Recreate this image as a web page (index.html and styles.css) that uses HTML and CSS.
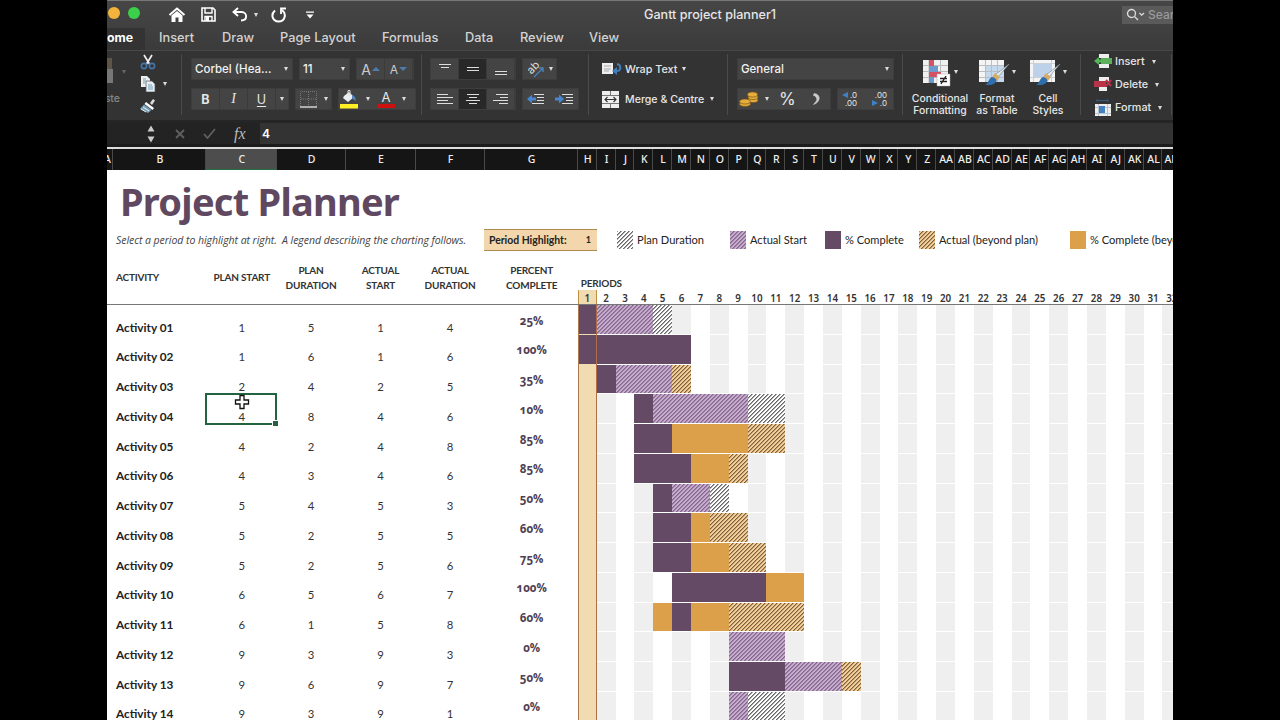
FILE: index.html
```html
<!DOCTYPE html>
<html lang="en">

<head>
    <meta charset="UTF-8">
    <meta name="viewport" content="width=device-width, initial-scale=1.0">
    <title>Gantt project planner1</title>
    <link rel="stylesheet" href="styles.css">
</head>

<body>
    <div class="window">
        <!-- Title bar -->
        <header class="titlebar">
            <span class="light yellow"></span>
            <span class="light green"></span>
            <svg class="quick home" width="18" height="16" viewBox="0 0 18 16"><path d="M1.500 8 9 1.500 16.500 8" fill="none" stroke="#fff" stroke-width="2"/><path d="M3.500 8.500 9 4l5.500 4.500V15h-4v-4.500h-3V15h-4z" fill="#fff"/></svg>
            <svg class="quick save" width="15" height="15" viewBox="0 0 15 15"><path d="M1 1h11l2 2v11H1z" fill="none" stroke="#fff" stroke-width="1.600"/><path d="M4 1v5h7V1M4 14V9.500h7V14" fill="none" stroke="#fff" stroke-width="1.400"/><path d="M5 10h3v4H5z" fill="#fff"/></svg>
            <svg class="quick undo" width="16" height="15" viewBox="0 0 16 15"><path d="M6 1 1.500 5 6 9M2 5h7.500c6 0 6.500 8.500-.5 8.500" fill="none" stroke="#fff" stroke-width="1.900"/></svg>
            <i class="caret"></i>
            <svg class="quick redo" width="16" height="16" viewBox="0 0 16 16"><path d="M4 3.500C-1 8 2 14.500 7.500 14.500c6.500 0 8.500-7.500 3.500-11.500" fill="none" stroke="#fff" stroke-width="2"/><path d="M15 1.500h-5v5.500" fill="none" stroke="#fff" stroke-width="1.800"/></svg>
            <svg class="quick more" width="8" height="8" viewBox="0 0 8 8"><path d="M0 .5h8v1.300H0zM.5 3.500h7L4 7.500z" fill="#fff"/></svg>
            <h1 class="doc-title">Gantt project planner1</h1>
            <div class="search">
                <svg width="20" height="14" viewBox="0 0 20 14"><circle cx="5.500" cy="5.500" r="4" fill="none" stroke="#ddd" stroke-width="1.300"/><path d="m8.500 8.500 3.500 3.500M13.500 5l2.200 2.200L18 5" fill="none" stroke="#ddd" stroke-width="1.300"/></svg>
                <span>Search Sheet</span>
            </div>
        </header>

        <nav class="tabs">
            <span class="tab active">Home</span>
            <span class="tab t-insert">Insert</span>
            <span class="tab t-draw">Draw</span>
            <span class="tab t-page">Page Layout</span>
            <span class="tab t-formulas">Formulas</span>
            <span class="tab t-data">Data</span>
            <span class="tab t-review">Review</span>
            <span class="tab t-view">View</span>
        </nav>

        <!-- Ribbon -->
        <div class="ribbon">
            <div class="group clipboard">
                <div class="paste">
                    <svg width="7" height="27" viewBox="0 0 7 27"><path d="M0 1h5v14H0z" fill="#5d5546"/><path d="M0 12h6v14H0z" fill="#777"/></svg>
                    <span>Paste</span>
                </div>
                <i class="caret dim"></i>
                <div class="clip-icons">
                    <svg width="16" height="16" viewBox="0 0 16 16"><path d="m4 1 5.500 9M12 1 6.500 10" stroke="#eee" stroke-width="1.700"/><g fill="none" stroke="#4474a8" stroke-width="1.700"><circle cx="4" cy="12" r="2.600"/><circle cx="12" cy="12" r="2.600"/></g></svg>
                    <svg width="16" height="16" viewBox="0 0 16 16"><path d="M1 0h6l3 3v8H1z" fill="#eee"/><path d="M6 5h6l3 3v8H6z" fill="#e6edf3" stroke="#555" stroke-width=".7"/><path d="M3 3h3M3 5h3M3 7h2M8 9h4M8 11h5M8 13h5" stroke="#70a0ba"/></svg>
                    <svg width="16" height="16" viewBox="0 0 16 16"><path d="m10 5 3-4 2 1.500-3 4.500z" fill="#ddd"/><path d="m6 4 8 6-1.500 2L4.500 6z" fill="#fff"/><path d="m4 6.500 7.500 5.500L8 15 0 11z" fill="#79a0bb"/><path d="m3 9 6 4M1 11l5 3" stroke="#eee"/></svg>
                </div>
                <i class="caret"></i>
            </div>

            <div class="group font">
                <div class="line">
                    <div class="box combo font-name"><span>Corbel (Hea...</span><i class="caret"></i></div>
                    <div class="box combo font-size"><span>11</span><i class="caret"></i></div>
                    <div class="box pair">
                        <span class="cell"><b class="big-a">A</b><i class="tri up"></i></span>
                        <span class="cell"><b class="small-a">A</b><i class="tri down"></i></span>
                    </div>
                </div>
                <div class="line">
                    <div class="box biu"><span class="cell"><b>B</b></span><span class="cell"><em>I</em></span><span class="cell"><u>U</u></span><i class="caret"></i></div>
                    <div class="box borders">
                        <svg width="17" height="17" viewBox="0 0 17 17"><path d="M.5 15V.5h16V15M8.500 1v14M1 8h15" fill="none" stroke="#777" stroke-dasharray="1 1"/><path d="M0 16h17" stroke="#ddd" stroke-width="1.400"/></svg>
                        <i class="caret"></i>
                    </div>
                    <div class="box colours">
                        <svg width="20" height="20" viewBox="0 0 20 20"><path d="m5 7 5-4 5 5-6 5-5-4z" fill="#e8eef2"/><path d="M9 6V1.500h2V7" fill="none" stroke="#ddd"/><path d="M13 6c3 1 4 3 3.500 6L13 9z" fill="#4f8ac5"/><path d="M1 15h18v4.500H1z" fill="#ffef24"/></svg>
                        <i class="caret"></i>
                        <span class="font-colour">A</span>
                        <i class="caret"></i>
                    </div>
                </div>
            </div>

            <div class="group align">
                <div class="line">
                    <div class="box trio">
                        <span class="cell"><svg width="14" height="16"><path d="M1 3.500h12M3 6.500h8" stroke="#ddd"/></svg></span>
                        <span class="cell on"><svg width="14" height="16"><path d="M1 6.500h12M1 9.500h12" stroke="#ddd"/></svg></span>
                        <span class="cell"><svg width="14" height="16"><path d="M1 10.500h12M1 13.500h12" stroke="#ddd"/></svg></span>
                    </div>
                    <div class="box orient">
                        <svg width="18" height="18" viewBox="0 0 18 18"><text class="ab" x="0" y="11" transform="rotate(-45 6 9)">ab</text><path d="m6 17 9-9M11 8h4v4" fill="none" stroke="#4b83b8" stroke-width="1.400"/></svg>
                        <i class="caret"></i>
                    </div>
                </div>
                <div class="line">
                    <div class="box trio">
                        <span class="cell"><svg width="16" height="12"><path d="M0 1.500h11M0 4.500h16M0 7.500h11M0 10.500h16" stroke="#ddd"/></svg></span>
                        <span class="cell on"><svg width="14" height="12"><path d="M1 1.500h12M3 4.500h8M0 7.500h14M3 10.500h8" stroke="#ddd"/></svg></span>
                        <span class="cell"><svg width="16" height="12"><path d="M3 1.500h12M7 4.500h8M0 7.500h15M6 10.500h9" stroke="#ddd"/></svg></span>
                    </div>
                    <div class="box indents">
                        <svg width="18" height="12" viewBox="0 0 18 12"><path d="M7 1.500h10M10 4.500h7M10 7.500h7M5 10.500h12" stroke="#ddd"/><path d="m0 6 5-4.500v3h4v3H5v3z" fill="#4687cf"/></svg>
                        <svg width="18" height="12" viewBox="0 0 18 12"><path d="M7 1.500h11M11 4.500h7M11 7.500h7M7 10.500h11" stroke="#ddd"/><path d="M9 6 4 1.500v3H0v3h4v3z" fill="#4687cf"/></svg>
                    </div>
                </div>
            </div>

            <div class="group wrap">
                <div class="line">
                    <svg width="20" height="14" viewBox="0 0 20 14"><path d="M0 1h11v11H0z" fill="#eee"/><path d="M2 4h7M2 7h7M2 9h5" stroke="#aaa"/><path d="M15 2c5 1 4 8-1 7" fill="none" stroke="#427eb9" stroke-width="2"/><path d="m10 9 5-4v8z" fill="#427eb9"/></svg>
                    <span>Wrap Text</span><i class="caret"></i>
                </div>
                <div class="line merge">
                    <svg width="17" height="17" viewBox="0 0 17 17"><path d="M0 0h17v17H0z" fill="#eee"/><path d="M0 4.500h17M0 12.500h17M8.500 0v4M8.500 13v4" stroke="#777"/><path d="M3 8.500h11M5.500 6 3 8.500 5.500 11M11.500 6 14 8.500 11.500 11" fill="none" stroke="#333" stroke-width="1.100"/></svg>
                    <span>Merge &amp; Centre</span><i class="caret"></i>
                </div>
            </div>

            <div class="group number">
                <div class="line">
                    <div class="box combo general"><span>General</span><i class="caret"></i></div>
                </div>
                <div class="line">
                    <div class="box currency">
                        <svg width="20" height="16" viewBox="0 0 20 16"><g fill="#e5ad3c" stroke="#7c5516" stroke-width=".7"><ellipse cx="14" cy="9" rx="5" ry="2.500"/><ellipse cx="14" cy="6" rx="5" ry="2.500"/><ellipse cx="13.500" cy="3.500" rx="5" ry="2.500"/><ellipse cx="6" cy="13" rx="5.500" ry="2.500"/><ellipse cx="6" cy="10.500" rx="5.500" ry="2.500"/></g></svg>
                        <i class="caret"></i>
                        <span class="percent">%</span>
                        <svg width="8" height="12" viewBox="0 0 8 12"><path d="M2 .5C9 1 9 9 1.500 11.500 4.500 8 5.500 6.500 4.500 5 4 3.500 2.500 2.500 1.500 2.500z" fill="#ccc" stroke="#ccc" stroke-width=".6"/></svg>
                    </div>
                    <div class="box decimals">
                        <span><i class="arrow left"></i>.0<br>.00</span>
                        <span>.00<br><i class="arrow right"></i>.0</span>
                    </div>
                </div>
            </div>

            <div class="group styles">
                <div class="tool t1">
                    <div class="tool-icon">
                        <svg width="30" height="28" viewBox="0 0 30 28"><path d="M1 1h25v23H1z" fill="#eef0f2"/><path d="M1 6.500h25M1 12.500h25M1 18.500h25M7 1v23M18.500 1v23" stroke="#bbb"/><path d="M7 1h5v6H7z" fill="#d65161"/><path d="M7 7h9v6H7z" fill="#6c99ce"/><path d="M7 13h12v5H7z" fill="#d65161"/><path d="M7 18h5v6H7z" fill="#6c99ce"/><path d="M15 15h13v12H15z" fill="#fff" stroke="#aaa" stroke-width=".5"/><path d="M18 19.500h7M18 22.500h7M24 17l-5 8" stroke="#222" stroke-width="1.400"/></svg>
                        <i class="caret"></i>
                    </div>
                    <span>Conditional<br>Formatting</span>
                </div>
                <div class="tool t2">
                    <div class="tool-icon">
                        <svg width="32" height="28" viewBox="0 0 32 28"><path d="M1 1h25v22H1z" fill="#f4f4f4"/><path d="M8 7h18v16H8z" fill="#c3d9ee"/><path d="M1 6.500h25M1 12.500h25M1 18.500h25M7.500 1v22M13.500 1v22M19.500 1v22" stroke="#b7bec4"/><path d="M31 5 20 18l-3-2z" fill="#e8eef0" stroke="#7c8d96" stroke-width=".7"/><path d="m17 14 5 4-3 4-5-4z" fill="#d5ab68"/><path d="M14 18c2 0 6 3 4 5-3 4-8 3-11 3 4-2 3-6 7-8z" fill="#2f6fae"/></svg>
                        <i class="caret"></i>
                    </div>
                    <span>Format<br>as Table</span>
                </div>
                <div class="tool t3">
                    <div class="tool-icon">
                        <svg width="32" height="28" viewBox="0 0 32 28"><path d="M1 1h25v22H1z" fill="#f4f4f4"/><path d="M5 5h17v13H5z" fill="#bdd2ea"/><path d="M1 4.500h25M1 18.500h25M4.500 1v22M22.500 1v22" stroke="#cbd0d4"/><path d="M31 5 20 18l-3-2z" fill="#e8eef0" stroke="#7c8d96" stroke-width=".7"/><path d="m17 14 5 4-3 4-5-4z" fill="#d5ab68"/><path d="M14 18c2 0 6 3 4 5-3 4-8 3-11 3 4-2 3-6 7-8z" fill="#2f6fae"/></svg>
                        <i class="caret"></i>
                    </div>
                    <span>Cell<br>Styles</span>
                </div>
            </div>

            <div class="group cells">
                <div class="line">
                    <svg width="18" height="15" viewBox="0 0 18 15"><path d="M5 0h10v4H5zM5 10h10v4H5z" fill="#eee"/><path d="M7 4h11v6H7z" fill="#5fae60"/><path d="m0 7 5-4v2.500h5v3H5V11z" fill="#53b558"/></svg>
                    <span>Insert</span><i class="caret"></i>
                </div>
                <div class="line">
                    <svg width="18" height="15" viewBox="0 0 18 15"><path d="M5 0h10v4H5zM5 10h8v4H5z" fill="#eee"/><path d="M0 4h12v6H0z" fill="#b93447"/><path d="m12 3 5 6M17 3l-5 6" stroke="#b93447" stroke-width="2"/></svg>
                    <span>Delete</span><i class="caret"></i>
                </div>
                <div class="line">
                    <svg width="18" height="17" viewBox="0 0 18 17"><path d="M3 1.500h11M3 0v3M14 0v3" stroke="#315a88"/><path d="M1 5h16v12H1z" fill="#eee"/><path d="M1 8.500h16M1 14.500h16M4.500 5v12M13.500 5v12" stroke="#b9c5cf"/><path d="M5 7h6v7H5z" fill="#4681c0"/></svg>
                    <span>Format</span><i class="caret"></i>
                </div>
            </div>
        </div>

        <!-- Formula bar -->
        <div class="formula">
            <div class="name-box">
                <svg width="8" height="18" viewBox="0 0 8 18"><path d="M.5 6.500 4 .5l3.500 6zM.5 11.500 4 17.500l3.500-6z" fill="#ccc"/></svg>
            </div>
            <svg class="cancel" width="10" height="10" viewBox="0 0 10 10"><path d="m1 1 8 8M9 1 1 9" stroke="#606060" stroke-width="1.800"/></svg>
            <svg class="accept" width="13" height="11" viewBox="0 0 13 11"><path d="m1 6 3.500 4L12 1" fill="none" stroke="#606060" stroke-width="1.800"/></svg>
            <em class="fx">fx</em>
            <span class="value">4</span>
        </div>

        <!-- Sheet -->
        <div class="letters grid" id="letters"></div>
        <main class="sheet">
            <h2>Project Planner</h2>
            <div class="legend">
                <p class="hint">Select a period to highlight at right.&nbsp; A legend describing the charting follows.</p>
                <div class="highlight"><span>Period Highlight:</span><span class="highlight-value">1</span></div>
                <div class="key k1"><i class="swatch plan"></i>Plan Duration</div>
                <div class="key k2"><i class="swatch actual"></i>Actual Start</div>
                <div class="key k3"><i class="swatch complete"></i>% Complete</div>
                <div class="key k4"><i class="swatch beyond"></i>Actual (beyond plan)</div>
                <div class="key k5"><i class="swatch over"></i>% Complete (beyond plan)</div>
            </div>
            <div class="head grid" id="head">
                <span class="label first">ACTIVITY</span>
                <span class="label c3">PLAN START</span>
                <span class="label c4">PLAN<br>DURATION</span>
                <span class="label c5">ACTUAL<br>START</span>
                <span class="label c6">ACTUAL<br>DURATION</span>
                <span class="label c7">PERCENT<br>COMPLETE</span>
                <span class="periods">PERIODS</span>
            </div>
            <div class="rows" id="rows"></div>
        </main>
    </div>
    <script src="script.js"></script>
</body>

</html>
```

FILE: styles.css
```css
body {
    margin: 0;
    background: #000;
    height: 720px;
    overflow: hidden;
    font-family: Inter, "Liberation Sans", sans-serif;
}

.window {
    width: 1066px;
    height: 720px;
    margin-left: 107px;
    overflow: hidden;
    background: #fff;
    color: #e6e6e6;
}

svg {
    flex: none;
}

/* small triangle used by every drop-down */
.caret {
    flex: none;
    width: 0;
    height: 0;
    border: 2.5px solid transparent;
    border-top: 4px solid #ddd;
    border-bottom: 0;
}

.caret.dim {
    border-top-color: #666;
}

/* title bar */
.titlebar {
    display: flex;
    align-items: center;
    height: 28px;
    box-sizing: border-box;
    border-top: 1px solid #777;
    background: linear-gradient(#464646, #404040);
}

.titlebar > * {
    flex: none;
}

.light {
    width: 12px;
    height: 12px;
    margin-bottom: 3px;
    border-radius: 50%;
}

.yellow {
    background: #f4b43c;
    margin-left: 1px;
}

.green {
    background: #3bcf4a;
    margin-left: 8px;
}

.home { margin-left: 28px; }
.save { margin-left: 15px; }
.undo { margin-left: 16px; }
.titlebar .caret { margin-left: 6px; }
.redo { margin-left: 13px; }
.more { margin-left: 19px; }

.doc-title {
    margin: 0 0 0 330px;
    width: 140px;
    font-size: 12.6px;
    font-weight: 500;
    white-space: nowrap;
}

.search {
    display: flex;
    align-items: center;
    box-sizing: border-box;
    gap: 2px;
    height: 18px;
    width: 80px;
    margin-left: 338px;
    padding-left: 4px;
    background: #5a5a5a;
    color: #999;
    font-size: 12px;
    font-weight: 500;
    white-space: nowrap;
}

/* tabs */
.tabs {
    display: flex;
    height: 22px;
    background: linear-gradient(#404040, #3b3b3b);
    font-size: 12.8px;
    font-weight: 500;
    line-height: 20px;
    color: #d2d2d2;
    white-space: nowrap;
}

.tab {
    flex: none;
}

.tab.active {
    display: flex;
    justify-content: flex-end;
    box-sizing: border-box;
    width: 38px;
    padding-right: 12px;
    height: 22px;
    background: #333;
    color: #fff;
    font-size: 12.3px;
    font-weight: 700;
}

.t-insert { width: 62px; padding-left: 14px; box-sizing: border-box; }
.t-draw { width: 58px; margin-left: 15px; }
.t-page { width: 102px; }
.t-formulas { width: 83px; }
.t-data { width: 55px; }
.t-review { width: 69px; }

/* ribbon */
.ribbon {
    display: flex;
    height: 70px;
    box-sizing: border-box;
    border-top: 1px solid #484848;
    background: #333;
    font-size: 10.8px;
    font-weight: 500;
}

.group {
    flex: none;
    box-sizing: border-box;
    margin: 3px 0 5px;
    padding: 4px 0 0 8px;
    border-right: 1px solid #4a4a4a;
    white-space: nowrap;
}

.line {
    display: flex;
    align-items: center;
    height: 22px;
    margin-bottom: 8px;
    gap: 6px;
}

.box {
    display: flex;
    align-items: center;
    height: 22px;
    box-sizing: border-box;
    background: #444;
    border: 1px solid #3d3d3d;
}

.cell {
    display: flex;
    align-items: center;
    justify-content: center;
    width: 28px;
    height: 20px;
    border-right: 1px solid #3b3b3b;
    box-sizing: border-box;
}

.cell.on {
    background: #282828;
}

.combo {
    justify-content: space-between;
    padding: 0 4px 0 3px;
    font-size: 11.5px;
    color: #f2f2f2;
}

.clipboard {
    display: flex;
    width: 75px;
    padding: 0;
}

.paste {
    display: flex;
    flex-direction: column;
    align-items: flex-end;
    justify-content: space-between;
    width: 13px;
    height: 48px;
    padding-top: 3px;
    color: #888;
    font-size: 10.5px;
}

.paste svg {
    align-self: flex-start;
}

.clipboard .caret {
    margin: 16px 0 0 2px;
}

.clip-icons {
    display: flex;
    flex-direction: column;
    gap: 6px;
    margin-left: 14px;
}

.clipboard .clip-icons + .caret {
    margin: 28px 0 0 7px;
}

.clipboard .caret.dim {
    margin-left: 2px;
}

.font { width: 240px; padding-left: 9px; }
.font-name { width: 102px; }
.font-size { width: 51px; }
.pair { width: 58px; color: #ccc; }

.big-a {
    font-size: 14px;
    font-weight: 400;
}

.small-a {
    font-size: 12px;
    font-weight: 400;
}

.tri {
    border: 4px solid transparent;
    margin-left: 1px;
}

.tri.up {
    border-bottom-color: #4d7cad;
    border-top: 0;
}

.tri.down {
    border-top-color: #4d7cad;
    border-bottom: 0;
}

.biu {
    width: 98px;
    font-size: 12.5px;
}

.biu em {
    font-family: "Liberation Serif", serif;
    font-size: 14px;
}

.biu u {
    font-weight: 400;
    text-underline-offset: 2px;
}

.biu .caret { margin-left: 4px; }
.borders { width: 37px; padding-left: 4px; gap: 7px; }
.colours { width: 78px; padding-left: 0; gap: 7px; }

.font-colour {
    width: 18px;
    height: 18px;
    line-height: 14px;
    border-bottom: 4px solid #cc1111;
    box-sizing: border-box;
    text-align: center;
    font-size: 13px;
    font-weight: 400;
}

.align { width: 167px; }
.trio { width: 86px; }
.orient { width: 35px; padding-left: 5px; gap: 3px; }
.indents { width: 57px; padding-left: 4px; gap: 10px; }

.ab {
    font: 11px Inter, sans-serif;
    fill: #ddd;
}

.wrap {
    width: 139px;
    padding-left: 13px;
}

.wrap .line {
    gap: 3px;
}

.wrap .line.merge {
    gap: 6px;
    font-size: 10.6px;
}

.wrap .line span {
    margin-right: 2px;
}

.wrap .merge span {
    margin-right: 0;
}

.number { width: 175px; padding-left: 9px; }
.general { width: 157px; }
.currency { width: 94px; padding-left: 1px; }
.currency .caret { margin: 0 10px 0 6px; }

.percent {
    width: 33px;
    font-size: 17px;
    font-weight: 400;
}

.decimals {
    width: 57px;
    padding: 0 6px 0 4px;
    justify-content: space-between;
    font-size: 8px;
    font-weight: 400;
    line-height: 8px;
    text-align: right;
}

.arrow {
    display: inline-block;
    border: 3px solid transparent;
}

.arrow.left { border-right: 6px solid #3d82c6; border-left: 0; margin-right: 2px; }
.arrow.right { border-left: 6px solid #3d82c6; border-right: 0; margin-right: 2px; }

.styles {
    display: flex;
    width: 178px;
    padding-top: 5px;
}

.tool {
    display: flex;
    flex-direction: column;
    align-items: center;
    text-align: center;
    font-size: 10.4px;
    line-height: 12px;
}

.tool-icon {
    display: flex;
    align-items: center;
    gap: 2px;
    height: 28px;
    margin-bottom: 6px;
}

.tool-icon .caret {
    margin-bottom: 3px;
}

.t1 { width: 58px; }
.t2 { width: 56px; }
.t3 { width: 46px; }

.cells {
    width: 91px;
    padding: 0 0 0 13px;
    font-size: 10.8px;
}

.cells .line {
    height: 15px;
    margin-bottom: 8px;
    gap: 3px;
}

.cells .caret { margin-left: 4px; }

/* formula bar */
.formula {
    display: flex;
    align-items: center;
    height: 27px;
    box-sizing: border-box;
    border-top: 3px solid #252525;
    border-bottom: 3px solid #1c1c1c;
    background: linear-gradient(90deg, #232323 153px, #333 153px);
}

.name-box {
    display: flex;
    justify-content: flex-end;
    width: 48px;
    margin-right: 20px;
}

.accept { margin-left: 18px; }

.fx {
    margin-left: 18px;
    width: 28px;
    font: italic 16px "Liberation Serif", serif;
    color: #bbb;
}

.value {
    font-size: 12px;
    font-weight: 600;
    color: #fff;
}

/* sheet columns: A-G, then one narrow column per period */
.grid {
    display: grid;
    grid-template-columns: 6px 93px 70.5px 69px 70px 69px 93.300px repeat(32, 18.870px);
}

.letters {
    height: 23px;
    box-sizing: border-box;
    border-top: 2px solid #ddd;
    background: #151515;
    font-family: "Noto Sans", sans-serif;
    font-size: 10.5px;
    font-weight: 500;
    line-height: 20px;
    text-align: center;
    color: #eee;
}

.letters span {
    box-sizing: border-box;
    padding-left: 2px;
    border-right: 1px solid #484848;
    overflow: hidden;
    white-space: nowrap;
}

.letters .selected {
    background: #4d4d4d;
    border-bottom: 1px solid #217346;
}

.letters .cut {
    display: flex;
    justify-content: flex-end;
    padding-right: 1px;
}

.sheet {
    font-family: Lato, "Open Sans", sans-serif;
    color: #333;
}

.sheet h2 {
    margin: 0;
    height: 59px;
    padding-left: 13px;
    font-family: "Noto Sans", sans-serif;
    font-size: 38px;
    font-weight: 700;
    line-height: 63px;
    letter-spacing: -.75px;
    color: #604960;
}

.legend {
    display: flex;
    align-items: center;
    height: 22px;
    font-size: 11.1px;
    line-height: 16px;
    color: #222;
    white-space: nowrap;
}

.hint {
    flex: none;
    box-sizing: border-box;
    width: 377px;
    margin: 0;
    padding-left: 9px;
    font-family: "Open Sans", sans-serif;
    font-size: 10.5px;
    font-style: italic;
    letter-spacing: -.05px;
    color: #444;
}

.highlight {
    display: flex;
    flex: none;
    align-items: center;
    justify-content: space-between;
    box-sizing: border-box;
    width: 113px;
    height: 22px;
    margin-right: 20px;
    padding: 0 6px 0 5px;
    border-top: 1px solid #ad8b4d;
    border-bottom: 1px solid #ad8b4d;
    background: #f3d6ab;
    font-size: 10.4px;
    font-weight: 700;
}

.highlight-value {
    font-size: 9px;
}

.key {
    display: flex;
    align-items: center;
    flex: none;
    gap: 4px;
}

.swatch {
    width: 16px;
    height: 18px;
}

.k1 { width: 113px; }
.k2 { width: 95px; }
.k3 { width: 94px; }
.k4 { width: 151px; }

.head {
    grid-template-rows: 39px 14px;
    border-bottom: 1px solid #777;
    font-size: 10px;
    font-weight: 700;
    letter-spacing: -.2px;
    text-align: center;
}

.label {
    grid-row: 1 / 3;
    align-self: center;
    line-height: 15px;
}

.label.first {
    grid-column: 2;
    padding-left: 3px;
    text-align: left;
}

.c3 { grid-column: 3; padding-left: 1px; }
.c4 { grid-column: 4; }
.c5 { grid-column: 5; }
.c6 { grid-column: 6; }
.c7 { grid-column: 7; padding-left: 1px; }

.periods {
    grid-area: 1 / 8 / 2 / 12;
    align-self: end;
    padding-left: 3px;
    text-align: left;
    line-height: 14px;
}

.period {
    grid-row: 2;
    line-height: 17px;
    font-family: "Noto Sans", sans-serif;
    font-size: 9.8px;
    font-weight: 600;
    letter-spacing: 0;
    height: 14px;
}

.period.current,
.marked {
    background: #f1dbb1;
    box-sizing: border-box;
    border-left: 1px solid #bd9043;
    border-right: 1px solid #bd9043;
}

.row {
    height: 29.750px;
    font-size: 11.300px;
    text-align: center;
}

.row span {
    grid-row: 1;
    line-height: 15px;
    padding-top: 14.500px;
}

.row .name {
    grid-column: 2;
    padding-left: 3px;
    font-size: 11.800px;
    font-weight: 700;
    text-align: left;
    color: #222;
}

.row .percent-done {
    padding-top: 7.500px;
    font-family: "Open Sans", sans-serif;
    font-size: 11.500px;
    font-weight: 700;
    font-variant-numeric: oldstyle-nums;
    color: #513f53;
}

.stripe {
    grid-row: 1;
    margin-bottom: 1px;
    background: #efefef;
}

.marked {
    grid-area: 1 / 8;
}

.bar {
    grid-row: 1;
    margin-bottom: 1px;
    z-index: 1;
}

/* right edge of the highlighted period stays visible over the bars */
.edge {
    grid-area: 1 / 8;
    z-index: 2;
    border-left: 1px solid #a97952;
    border-right: 1px solid #b06f45;
}

.complete { background: #644a65; }
.over { background: #dca04a; }
.plan { background: repeating-linear-gradient(135deg, #666 0 .5px, #fff 1px 2.600px, #777 2.828px); }
.actual { background: repeating-linear-gradient(135deg, #84698c 0 .5px, #c8acd0 1.100px 2.600px, #84698c 2.828px); }
.beyond { background: repeating-linear-gradient(135deg, #80603c 0 .4px, #f3d09a 1px 2.600px, #927048 2.828px); }

/* selected cell and pointer lie over the sheet */
.picked {
    position: relative;
}

.selection {
    position: absolute;
    inset: -1px 0 -1px -1px;
    border: 2px solid #24633f;
}

.handle {
    position: absolute;
    right: -4px;
    bottom: -4px;
    width: 5px;
    height: 5px;
    background: #24633f;
    border: 1px solid #fff;
}

.pointer {
    position: absolute;
    left: 28px;
    top: 0;
}
```

FILE: script.js
```js
// name, plan start, plan duration, actual start, actual duration, percent, bars [type, from, to]
const activities = [
    ["Activity 01", 1, 5, 1, 4, 25, [["complete", 1, 1], ["actual", 2, 4], ["plan", 5, 5]]],
    ["Activity 02", 1, 6, 1, 6, 100, [["complete", 1, 6]]],
    ["Activity 03", 2, 4, 2, 5, 35, [["complete", 2, 2], ["actual", 3, 5], ["beyond", 6, 6]]],
    ["Activity 04", 4, 8, 4, 6, 10, [["complete", 4, 4], ["actual", 5, 9], ["plan", 10, 11]]],
    ["Activity 05", 4, 2, 4, 8, 85, [["complete", 4, 5], ["over", 6, 9], ["beyond", 10, 11]]],
    ["Activity 06", 4, 3, 4, 6, 85, [["complete", 4, 6], ["over", 7, 8], ["beyond", 9, 9]]],
    ["Activity 07", 5, 4, 5, 3, 50, [["complete", 5, 5], ["actual", 6, 7], ["plan", 8, 8]]],
    ["Activity 08", 5, 2, 5, 5, 60, [["complete", 5, 6], ["over", 7, 7], ["beyond", 8, 9]]],
    ["Activity 09", 5, 2, 5, 6, 75, [["complete", 5, 6], ["over", 7, 8], ["beyond", 9, 10]]],
    ["Activity 10", 6, 5, 6, 7, 100, [["complete", 6, 10], ["over", 11, 12]]],
    ["Activity 11", 6, 1, 5, 8, 60, [["over", 5, 5], ["complete", 6, 6], ["over", 7, 8], ["beyond", 9, 12]]],
    ["Activity 12", 9, 3, 9, 3, 0, [["actual", 9, 11]]],
    ["Activity 13", 9, 6, 9, 7, 50, [["complete", 9, 11], ["actual", 12, 14], ["beyond", 15, 15]]],
    ["Activity 14", 9, 3, 9, 1, 0, [["actual", 9, 9], ["plan", 10, 11]]]
];
const periodCount = 32;
const firstColumn = 8; // grid column of period 1

function letterOf(n) {
    return n < 26 ? String.fromCharCode(65 + n) : "A" + String.fromCharCode(65 + n - 26);
}

let letters = "";
for (let i = 0; i < 7 + periodCount; i++) {
    let cls = i == 2 ? "selected" : (i == 0 ? "cut" : "");
    letters += `<span class="${cls}">${letterOf(i)}</span>`;
}
document.getElementById("letters").innerHTML = letters;

let periods = "";
for (let p = 1; p <= periodCount; p++) {
    periods += `<span class="period ${p == 1 ? "current" : ""}" style="grid-column: ${firstColumn + p - 1}">${p}</span>`;
}
document.getElementById("head").insertAdjacentHTML("beforeend", periods);

const selection = `<div class="selection"><i class="handle"></i></div>
    <svg class="pointer" width="16" height="16" viewBox="0 0 16 16"><path d="M6 1.500h4V6h4.500v4H10v4.500H6V10H1.500V6H6z" fill="#fff" stroke="#111" stroke-width="1.300"/></svg>`;

let rows = "";
activities.forEach(function (a, i) {
    rows += `<div class="row grid"><span class="name">${a[0]}</span>`;
    rows += `<span class="c3 ${i == 3 ? "picked" : ""}">${a[1]}${i == 3 ? selection : ""}</span>`;
    rows += `<span class="c4">${a[2]}</span><span class="c5">${a[3]}</span><span class="c6">${a[4]}</span>`;
    rows += `<span class="c7 percent-done">${a[5]}%</span><div class="marked"></div>`;
    for (let p = 2; p <= periodCount; p += 2) {
        rows += `<div class="stripe" style="grid-column: ${firstColumn + p - 1}"></div>`;
    }
    a[6].forEach(function (b) {
        rows += `<div class="bar ${b[0]}" style="grid-column: ${firstColumn + b[1] - 1} / ${firstColumn + b[2]}"></div>`;
    });
    rows += `<div class="edge"></div></div>`;
});
document.getElementById("rows").innerHTML = rows;
```
